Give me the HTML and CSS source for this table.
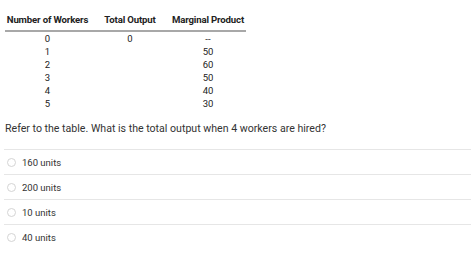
FILE: index.html
```html
<!DOCTYPE html>
<html>
<head>
<meta charset="utf-8">
<link rel="stylesheet" href="styles.css">
</head>
<body>
<table class="data">
  <colgroup>
    <col class="c1"><col class="c2"><col class="c3">
  </colgroup>
  <thead>
    <tr><th>Number of Workers</th><th>Total Output</th><th>Marginal Product</th></tr>
  </thead>
  <tbody>
    <tr><td>0</td><td>0</td><td>--</td></tr>
    <tr><td>1</td><td></td><td>50</td></tr>
    <tr><td>2</td><td></td><td>60</td></tr>
    <tr><td>3</td><td></td><td>50</td></tr>
    <tr><td>4</td><td></td><td>40</td></tr>
    <tr><td>5</td><td></td><td>30</td></tr>
  </tbody>
</table>
<p class="question">Refer to the table. What is the total output when 4 workers are hired?</p>
<ul class="options">
  <li><span class="radio"></span>160 units</li>
  <li><span class="radio"></span>200 units</li>
  <li><span class="radio"></span>10 units</li>
  <li><span class="radio"></span>40 units</li>
</ul>
</body>
</html>
```
FILE: styles.css
```css
html, body {
  margin: 0;
  padding: 0;
  background: #fff;
}
body {
  font-family: Roboto, "Liberation Sans", sans-serif;
  color: #333;
}
.data {
  border-collapse: collapse;
  table-layout: fixed;
  width: 241px;
  margin: 14px 0 0 5px;
  font-family: Roboto, sans-serif;
  color: #222;
}
.c1 { width: 85px; }
.c2 { width: 80px; }
.c3 { width: 76px; }
.data th {
  font-size: 9.6px;
  line-height: 12px;
  font-weight: bold;
  letter-spacing: -0.15px;
  padding: 0 0 4px 0;
  border-bottom: 2px solid #a8a8a8;
  white-space: nowrap;
  text-align: center;
}
.data td {
  font-size: 9.5px;
  text-align: center;
  height: 13px;
  padding: 0;
  line-height: 13px;
}
.question {
  margin: 12px 0 0 5px;
  font-size: 10.6px;
  line-height: 14px;
  color: #333;
}
.options {
  list-style: none;
  margin: 13px 3px 0 4px;
  padding: 0;
}
.options li {
  display: flex;
  align-items: center;
  height: 24px;
  border-top: 1px solid #e6e6e6;
  font-size: 9.5px;
  color: #333;
}
.radio {
  width: 7px;
  height: 7px;
  border: 1px solid #d4d4d4;
  border-radius: 50%;
  margin: 0 6px 0 3px;
}
```
